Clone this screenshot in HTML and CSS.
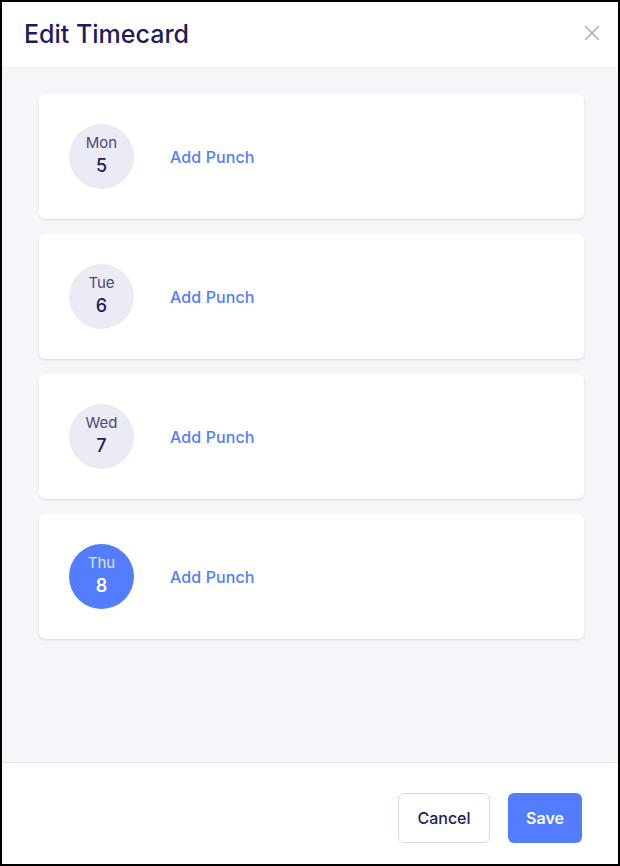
FILE: index.html
```html
<!DOCTYPE html>
<html lang="en">
<head>
<meta charset="utf-8">
<title>Edit Timecard</title>
<link rel="stylesheet" href="styles.css">
</head>
<body>
<div class="modal">
  <header class="modal-header">
    <h1 class="modal-title">Edit Timecard</h1>
    <button class="close-btn" aria-label="Close">
      <svg width="16" height="16" viewBox="0 0 16 16"><path d="M1.5 1.5 L14.5 14.5 M14.5 1.5 L1.5 14.5" stroke="#a6a4c4" stroke-width="1.4" fill="none" stroke-linecap="round"/></svg>
    </button>
  </header>
  <main class="modal-body">
    <div class="day-card">
      <div class="day-badge"><span class="day-name">Mon</span><span class="day-num">5</span></div>
      <a class="add-punch" href="#">Add Punch</a>
    </div>
    <div class="day-card">
      <div class="day-badge"><span class="day-name">Tue</span><span class="day-num">6</span></div>
      <a class="add-punch" href="#">Add Punch</a>
    </div>
    <div class="day-card">
      <div class="day-badge"><span class="day-name">Wed</span><span class="day-num">7</span></div>
      <a class="add-punch" href="#">Add Punch</a>
    </div>
    <div class="day-card">
      <div class="day-badge active"><span class="day-name">Thu</span><span class="day-num">8</span></div>
      <a class="add-punch" href="#">Add Punch</a>
    </div>
  </main>
  <footer class="modal-footer">
    <button class="btn btn-cancel">Cancel</button>
    <button class="btn btn-save">Save</button>
  </footer>
</div>
</body>
</html>
```
FILE: styles.css
```css
* { box-sizing: border-box; }
html, body { margin: 0; padding: 0; }
body {
  font-family: Inter, "Noto Sans", sans-serif;
  background: #fff;
}
.modal {
  width: 620px;
  height: 866px;
  border: 2px solid #000;
  display: flex;
  flex-direction: column;
  background: #fff;
}
.modal-header {
  height: 66px;
  flex: 0 0 66px;
  display: flex;
  align-items: center;
  justify-content: space-between;
  padding: 0 18px 0 22px;
  border-bottom: 1px solid #ededf3;
}
.modal-title {
  margin: 0;
  font-size: 25px;
  font-weight: 500;
  color: #1f1b5e;
  position: relative;
  top: -1px;
}
.close-btn {
  background: none;
  border: 0;
  padding: 0;
  width: 16px;
  height: 16px;
  display: flex;
  cursor: pointer;
  position: relative;
  top: -2px;
}
.modal-body {
  flex: 1;
  background: #f5f5fa;
  padding: 26px 34px 0 37px;
  display: flex;
  flex-direction: column;
  gap: 15px;
}
.day-card {
  height: 125px;
  background: #fff;
  border-radius: 6px;
  box-shadow: 0 1px 2px rgba(30, 27, 94, 0.14);
  display: flex;
  align-items: center;
  padding: 0 30px;
  gap: 36px;
}
.day-badge {
  width: 65px;
  height: 65px;
  border-radius: 50%;
  background: #ebebf5;
  display: flex;
  flex-direction: column;
  align-items: center;
  justify-content: center;
  padding-bottom: 3px;
}
.day-name {
  font-size: 15px;
  line-height: 20px;
  margin-bottom: 2px;
  color: #4c4877;
}
.day-num {
  font-size: 18px;
  line-height: 22px;
  font-weight: 500;
  color: #1f1b5e;
}
.day-badge.active { background: #537cff; }
.day-badge.active .day-name { color: #dfe6ff; }
.day-badge.active .day-num { color: #fff; font-weight: 600; }
.add-punch {
  font-size: 16px;
  font-weight: 500;
  color: #537cff;
  text-decoration: none;
  letter-spacing: 0.1px;
}
.modal-footer {
  flex: 0 0 102px;
  height: 102px;
  border-top: 1px solid #e4e4ec;
  display: flex;
  justify-content: flex-end;
  align-items: flex-start;
  padding: 30px 36px 0 0;
  gap: 18px;
}
.btn {
  height: 50px;
  border-radius: 6px;
  font-family: Inter, "Noto Sans", sans-serif;
  font-size: 16px;
  font-weight: 500;
  cursor: pointer;
}
.btn-cancel {
  width: 92px;
  background: #fff;
  border: 1px solid #d6d4e4;
  color: #1f1b5e;
}
.btn-save {
  width: 74px;
  background: #537cff;
  border: 0;
  color: #fff;
  font-weight: 600;
}
```
